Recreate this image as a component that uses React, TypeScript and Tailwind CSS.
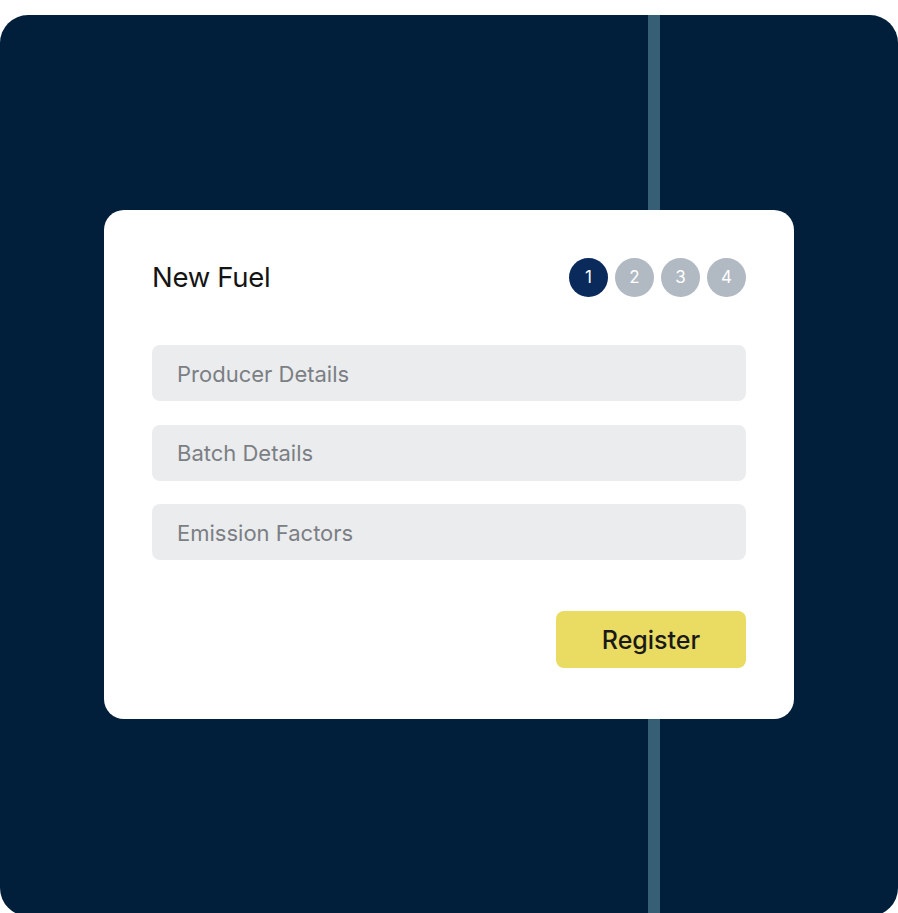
import React from "react"

const steps = [1, 2, 3, 4]
const fields = ["Producer Details", "Batch Details", "Emission Factors"]

export default function App() {
  return (
    <div className="h-[913px] w-[898px] overflow-hidden bg-white pt-[15px]" style={{ fontFamily: "Inter, 'Liberation Sans', sans-serif" }}>
      <div className="relative flex h-[901px] w-full items-start justify-center rounded-[28px] bg-[#011e3b]">
        {/* track line behind the card */}
        <div className="absolute left-[648px] top-0 h-full w-[12px] bg-[#365e75]" />

        <div className="relative mt-[195px] w-[690px] rounded-[20px] bg-white px-[48px] pb-[51px] pt-[48px]">
          <div className="flex h-[39px] items-center justify-between">
            <h1 className="text-[27.5px] font-normal tracking-[-0.3px] text-[#141414]">New Fuel</h1>
            <div className="flex gap-[7px]">
              {steps.map((n) => (
                <span
                  key={n}
                  className={`flex h-[39px] w-[39px] items-center justify-center rounded-full text-[17px] text-white ${
                    n === 1 ? "bg-[#0a2a5c]" : "bg-[#b1b9c2]"
                  }`}
                >
                  {n}
                </span>
              ))}
            </div>
          </div>

          <div className="mt-[48px] flex flex-col gap-[23.5px]">
            {fields.map((f) => (
              <div key={f} className="flex h-[56px] items-center rounded-[8px] bg-[#ebecee] px-[25px] pt-[2px] text-[22px] text-[#7b7f84]">
                {f}
              </div>
            ))}
          </div>

          <div className="mt-[51px] flex justify-end">
            <button type="button" className="h-[57px] w-[190px] rounded-[8px] bg-[#eadc62] pt-[2px] text-[25px] font-medium text-[#1a1a1a]">
              Register
            </button>
          </div>
        </div>
      </div>
    </div>
  )
}
